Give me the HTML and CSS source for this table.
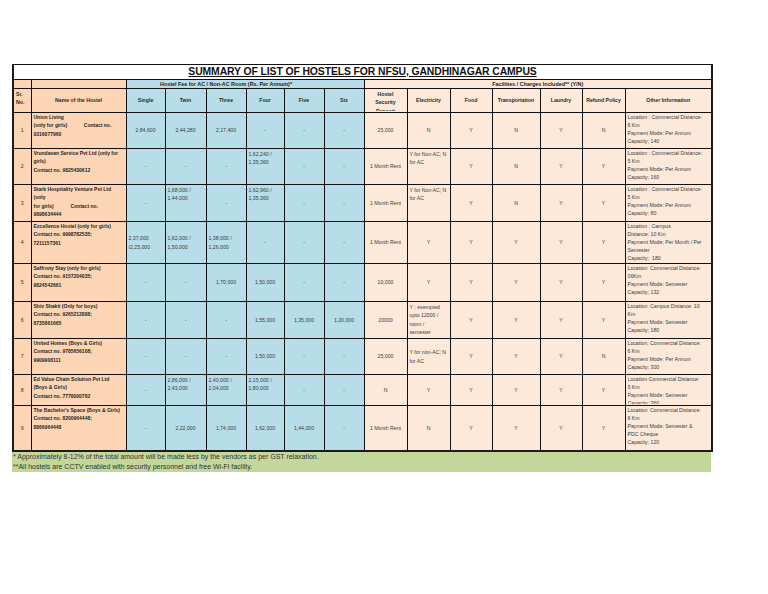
FILE: index.html
```html
<!DOCTYPE html>
<html>
<head>
<meta charset="utf-8">
<link rel="stylesheet" href="styles.css">
</head>
<body>
<div class="sheet">
<table class="grid">
<colgroup>
<col style="width:18px"><col style="width:95px"><col style="width:39px"><col style="width:41px"><col style="width:40px"><col style="width:38px"><col style="width:40px"><col style="width:40px"><col style="width:43px"><col style="width:43px"><col style="width:42px"><col style="width:48px"><col style="width:42px"><col style="width:43px"><col style="width:87px">
</colgroup>
<tr class="h-title"><td colspan="15" class="title"><span>SUMMARY OF LIST OF HOSTELS FOR NFSU, GANDHINAGAR CAMPUS</span></td></tr>
<tr class="h-group">
<td class="peach"></td><td class="peach"></td>
<td colspan="6" class="blue grouphead fee">Hostel Fee for AC / Non-AC Room (Rs. Per Annum)*</td>
<td colspan="7" class="light grouphead">Facilities / Charges Included** (Y/N)</td>
</tr>
<tr class="h-cols">
<td class="peach head tl">Sr.<br>No.</td>
<td class="peach head">Name of the Hostel</td>
<td class="blue head">Single</td>
<td class="blue head">Twin</td>
<td class="blue head">Three</td>
<td class="blue head">Four</td>
<td class="blue head">Five</td>
<td class="blue head">Six</td>
<td class="light head top"><div class="clip22">Hostel<br>Security<br>Deposit</div></td>
<td class="light head">Electricity</td>
<td class="light head">Food</td>
<td class="light head">Transportation</td>
<td class="light head">Laundry</td>
<td class="light head">Refund Policy</td>
<td class="light head">Other Information</td>
</tr>

<tr class="r1">
<td class="peach sr">1</td>
<td class="peach name">Union Living<br><span class="pre">(only for girls)            Contact no.</span><br>9316077960</td>
<td class="blue c">2,84,600</td><td class="blue c">2,44,280</td><td class="blue c">2,17,400</td>
<td class="blue c">-</td><td class="blue c">-</td><td class="blue c">-</td>
<td class="light c">25,000</td><td class="light c">N</td><td class="light c">Y</td><td class="light c">N</td><td class="light c">Y</td><td class="light c">N</td>
<td class="light info">Location : Commercial Distance:<br>6 Km<br>Payment Mode: Per Annum<br>Capacity; 140</td>
</tr>

<tr class="r2">
<td class="peach sr">2</td>
<td class="peach name">Vrundavan Service Pvt Ltd (only for<br>girls)<br>Contact no. 9825430612</td>
<td class="blue c">-</td><td class="blue c">-</td><td class="blue c">-</td>
<td class="blue tlt">1,62,240 /<br>1,35,360</td><td class="blue c">-</td><td class="blue c">-</td>
<td class="light c">1 Month Rent</td><td class="light tlt">Y for Non AC; N<br>for AC</td><td class="light c">Y</td><td class="light c">N</td><td class="light c">Y</td><td class="light c">Y</td>
<td class="light info">Location : Commercial Distance:<br>5 Km<br>Payment Mode: Per Annum<br>Capacity; 160</td>
</tr>

<tr class="r3">
<td class="peach sr">3</td>
<td class="peach name">Stark Hospitality Venture Pvt Ltd<br>(only<br><span class="pre">for girls)            Contact no.</span><br>9898634444</td>
<td class="blue c">-</td><td class="blue tlt">1,68,000 /<br>1,44,000</td><td class="blue c">-</td>
<td class="blue tlt">1,62,960 /<br>1,35,360</td><td class="blue c">-</td><td class="blue c">-</td>
<td class="light c">1 Month Rent</td><td class="light tlt">Y for Non AC; N<br>for AC</td><td class="light c">Y</td><td class="light c">N</td><td class="light c">Y</td><td class="light c">Y</td>
<td class="light info">Location : Commercial Distance:<br>5 Km<br>Payment Mode: Per Annum<br>Capacity; 80</td>
</tr>

<tr class="r4">
<td class="peach sr">4</td>
<td class="peach name">Excellence Hostel (only for girls)<br>Contact no. 9998782535;<br>7211157361</td>
<td class="blue ml">2,37,000<br>/2,25,000</td><td class="blue ml">1,62,000 /<br>1,50,000</td><td class="blue ml">1,38,000 /<br>1,26,000</td>
<td class="blue c">-</td><td class="blue c">-</td><td class="blue c">-</td>
<td class="light c">1 Month Rent</td><td class="light c">Y</td><td class="light c">Y</td><td class="light c">Y</td><td class="light c">Y</td><td class="light c">Y</td>
<td class="light info">Location : Campus<br>Distance: 10 Km<br>Payment Mode; Per Month / Per<br>Semester<br>Capacity;&nbsp; 180</td>
</tr>

<tr class="r5">
<td class="peach sr">5</td>
<td class="peach name">Saffrony Stay (only for girls)<br>Contact no. 9157204035;<br>9824542661</td>
<td class="blue c">-</td><td class="blue c">-</td><td class="blue c">1,70,000</td>
<td class="blue c">1,50,000</td><td class="blue c">-</td><td class="blue c">-</td>
<td class="light c">10,000</td><td class="light c">Y</td><td class="light c">Y</td><td class="light c">Y</td><td class="light c">Y</td><td class="light c">Y</td>
<td class="light info">Location: Commercial Distance:<br>06Km<br>Payment Mode: Semester<br>Capacity; 132</td>
</tr>

<tr class="r6">
<td class="peach sr">6</td>
<td class="peach name">Shiv Shakti (Only for boys)<br>Contact no. 9265212888;<br>8735861665</td>
<td class="blue c">-</td><td class="blue c">-</td><td class="blue c">-</td>
<td class="blue c">1,55,000</td><td class="blue c">1,35,000</td><td class="blue c">1,20,000</td>
<td class="light c">20000</td><td class="light tlt">Y ; exempted<br>upto 12000 /<br>room /<br>semester</td><td class="light c">Y</td><td class="light c">Y</td><td class="light c">Y</td><td class="light c">Y</td>
<td class="light info">Location: Campus Distance: 10<br>Km<br>Payment Mode: Semester<br>Capacity; 180</td>
</tr>

<tr class="r7">
<td class="peach sr">7</td>
<td class="peach name">United Homes (Boys &amp; Girls)<br>Contact no. 9785656108;<br>9909908111</td>
<td class="blue c">-</td><td class="blue c">-</td><td class="blue c">-</td>
<td class="blue c">1,50,000</td><td class="blue c">-</td><td class="blue c">-</td>
<td class="light c">25,000</td><td class="light ml">Y for non-AC; N<br>for AC</td><td class="light c">Y</td><td class="light c">Y</td><td class="light c">Y</td><td class="light c">N</td>
<td class="light info">Location; Commercial Distance:<br>6 Km<br>Payment Mode: Per Annum<br>Capacity; 300</td>
</tr>

<tr class="r8">
<td class="peach sr">8</td>
<td class="peach name">Ed Value Chain Solution Pvt Ltd<br>(Boys &amp; Girls)<br>Contact no. 7778000782</td>
<td class="blue c">-</td><td class="blue tlt">2,86,000 /<br>2,43,000</td><td class="blue tlt">2,40,000 /<br>2,04,000</td>
<td class="blue tlt">2,15,000 /<br>1,80,000</td><td class="blue c">-</td><td class="blue c">-</td>
<td class="light c">N</td><td class="light c">Y</td><td class="light c">Y</td><td class="light c">Y</td><td class="light c">Y</td><td class="light c">Y</td>
<td class="light info"><div class="clip29">Location Commercial Distance:<br>6 Km<br>Payment Mode: Semester<br>Capacity: 360</div></td>
</tr>

<tr class="r9">
<td class="peach sr">9</td>
<td class="peach name">The Bachelor's Space (Boys &amp; Girls)<br>Contact no. 8200964448;<br>8866964448</td>
<td class="blue c">-</td><td class="blue c">2,22,000</td><td class="blue c">1,74,000</td>
<td class="blue c">1,62,000</td><td class="blue c">1,44,000</td><td class="blue c">-</td>
<td class="light c">1 Month Rent</td><td class="light c">N</td><td class="light c">Y</td><td class="light c">Y</td><td class="light c">Y</td><td class="light c">Y</td>
<td class="light info">Location: Commercial Distance:<br>6 Km<br>Payment Mode: Semester &amp;<br>PDC Cheque<br>Capacity; 120</td>
</tr>
</table>
<div class="notes">
<div>* Approximately 8-12% of the total amount will be made less by the vendors as per GST relaxation.</div>
<div>**All hostels are CCTV enabled with security personnel and free Wi-Fi facility.</div>
</div>
</div>
</body>
</html>
```

FILE: styles.css
```css
html, body {
  margin: 0;
  padding: 0;
  background: #ffffff;
}

.sheet {
  padding: 64px 0 0 12px;
  width: 699px;
  font-family: "Liberation Sans", Arial, sans-serif;
}

.grid {
  border-collapse: collapse;
  table-layout: fixed;
  width: 699px;
  border: 2px solid #1a1a1a;
  border-top: 1px solid #8a8a8a;
}

.grid td {
  border: 1px solid #111;
  padding: 0 2px;
  font-size: 5.2px;
  line-height: 8.4px;
  color: #3c3c3c;
  overflow: hidden;
  vertical-align: middle;
}

.h-title td { height: 14px; }
.h-group td { height: 8px; }
.h-cols td { height: 22px; }
.r1 td { height: 35px; }
.r2 td { height: 34px; }
.r3 td { height: 35px; }
.r4 td { height: 41px; }
.r5 td { height: 37px; }
.r6 td { height: 35px; }
.r7 td { height: 35px; }
.r8 td { height: 29px; }
.r9 td { height: 44px; }

.title {
  background: #ffffff;
  text-align: center;
  padding: 0;
  border-top: 1px solid #8a8a8a;
}

.title span {
  font-size: 10.4px;
  line-height: 14px;
  font-weight: bold;
  color: #111;
  text-decoration: underline;
  text-underline-offset: 1px;
  letter-spacing: -0.1px;
}

.peach { background: #fcd5b4; }
.blue { background: #b7dee8; }
.light { background: #fde9d9; }

.grid td.grouphead {
  text-align: center;
  font-weight: bold;
  color: #222;
  font-size: 5.4px;
  line-height: 8px;
}

.grid td.fee {
  padding-right: 40px;
}

.grid td.head {
  text-align: center;
  font-weight: bold;
  color: #2a2a2a;
}

.grid td.tl {
  text-align: left;
  vertical-align: top;
  padding-top: 1px;
}

.grid td.top {
  vertical-align: top;
}

.clip22 {
  height: 22px;
  overflow: hidden;
  padding-top: 1px;
  box-sizing: border-box;
}

.clip29 {
  height: 29px;
  overflow: hidden;
}

.grid td.sr {
  text-align: center;
  color: #333;
}

.grid td.name {
  vertical-align: top;
  font-weight: bold;
  color: #262626;
  font-size: 5px;
  white-space: nowrap;
}

.pre { white-space: pre; }

.grid td.c {
  text-align: center;
}

.grid td.tlt {
  text-align: left;
  vertical-align: top;
  padding-top: 1px;
}

.grid td.ml {
  text-align: left;
}

.grid td.info {
  vertical-align: top;
  text-align: left;
  white-space: nowrap;
  padding-left: 2px;
  line-height: 8px;
}

.notes {
  background: #c4d79b;
  width: 699px;
  height: 20px;
  font-size: 7px;
  line-height: 9.5px;
  color: #333;
  padding-left: 1px;
  box-sizing: border-box;
}
```
